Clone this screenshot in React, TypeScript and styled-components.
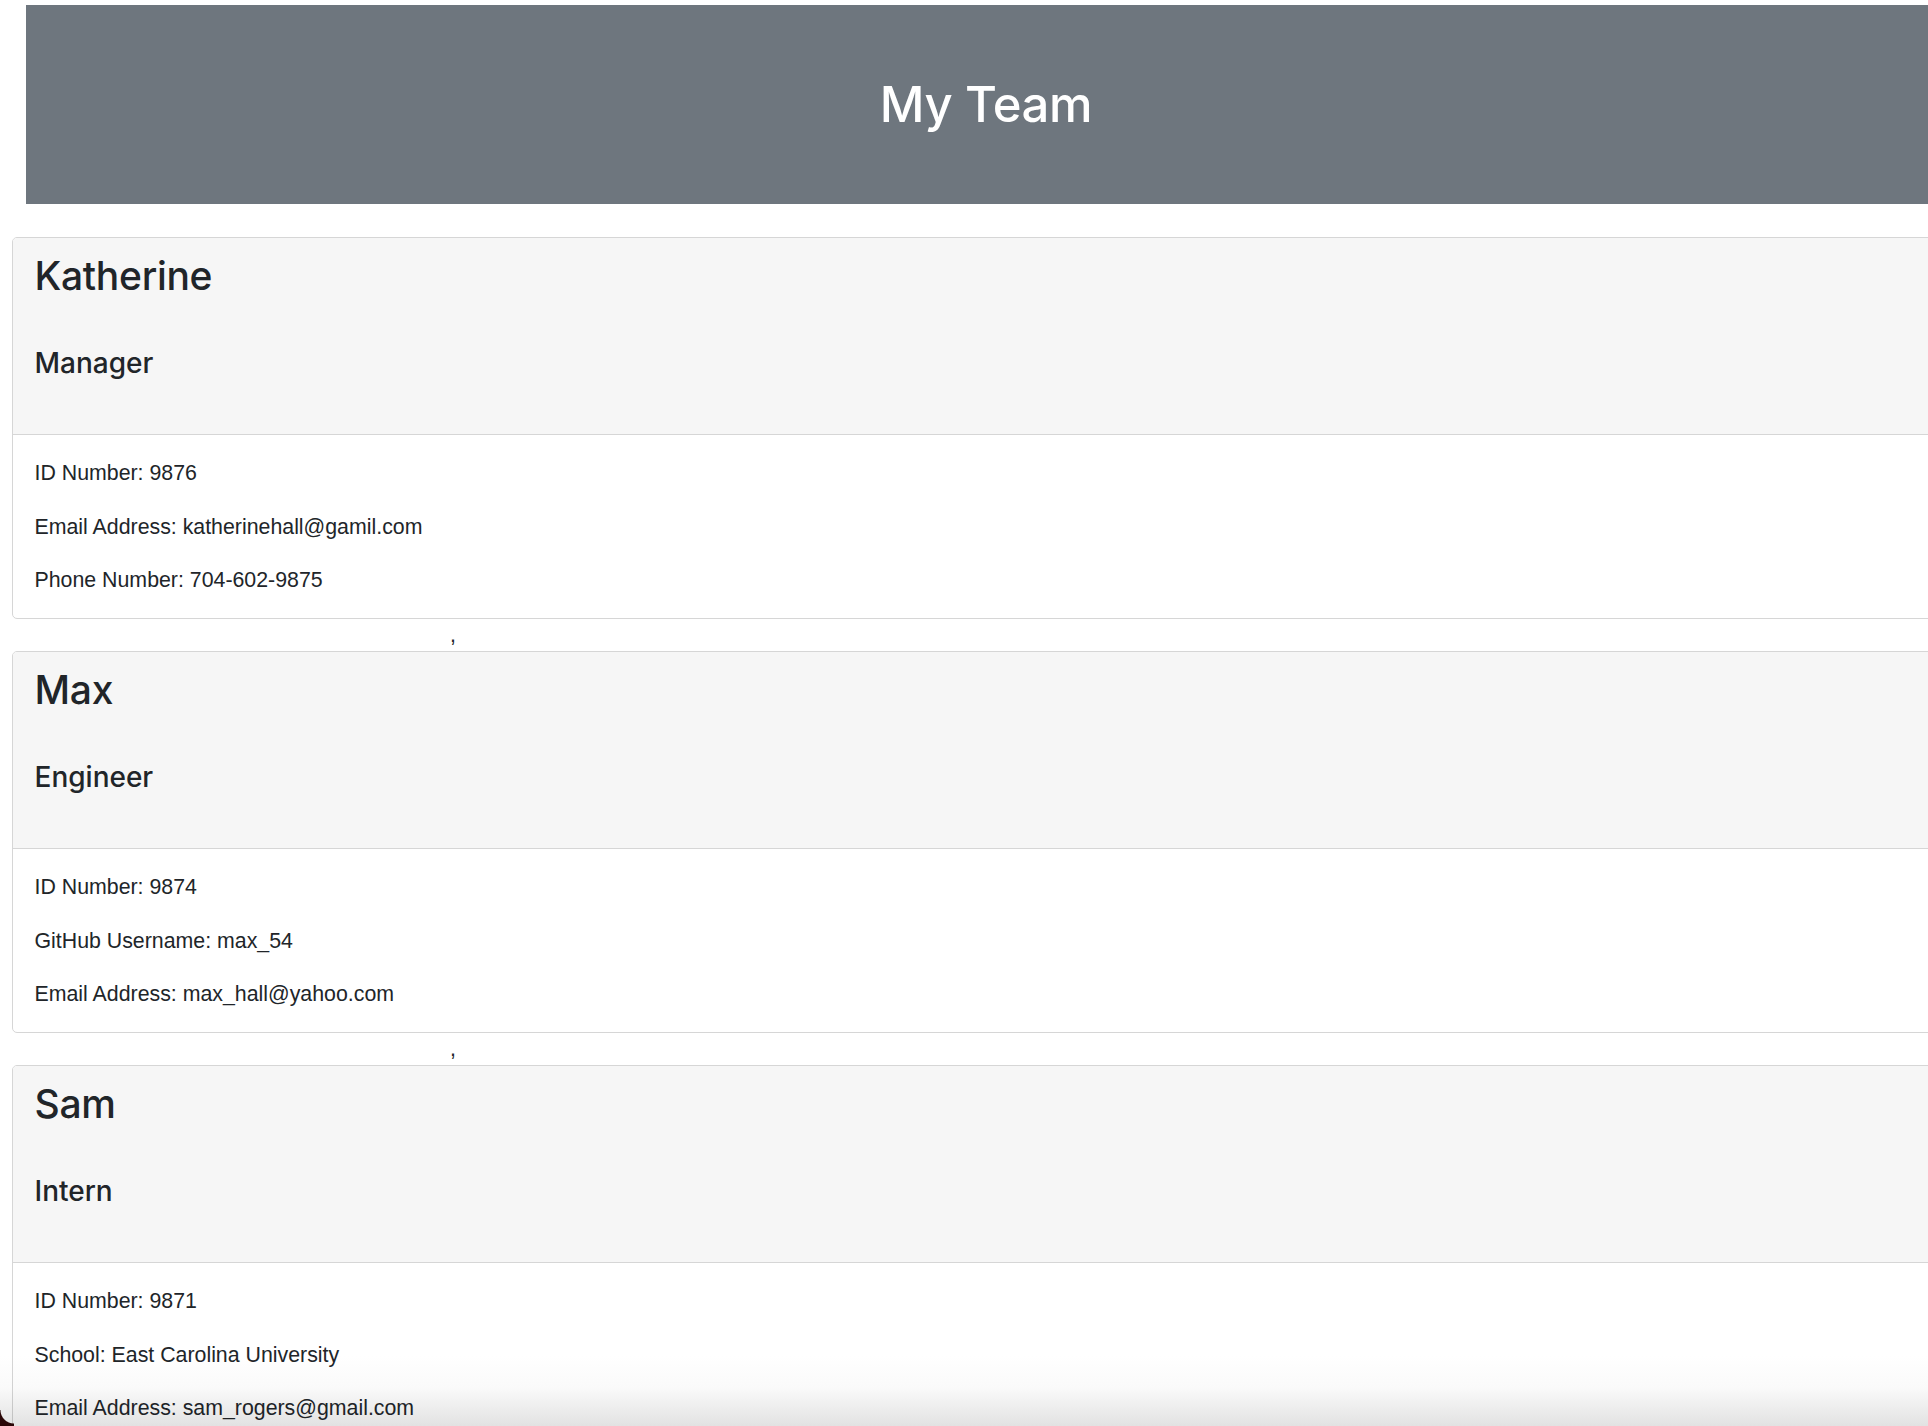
import React from 'react';
import styled, { createGlobalStyle } from 'styled-components';

const GlobalStyle = createGlobalStyle`
    html,
    body {
        margin: 0;
        padding: 0;
        background: #ffffff;
        overflow-x: hidden;
        scrollbar-width: none;
    }

    body::-webkit-scrollbar {
        display: none;
    }

    body {
        font-family: 'Liberation Sans', Arial, sans-serif;
        color: #212529;
    }

    h1,
    h2,
    h3 {
        font-family: Inter, 'Liberation Sans', Arial, sans-serif;
        font-weight: 500;
    }
`;

const Page = styled.div`
    width: 1960px;
    padding-top: 5px;
`;

const Jumbotron = styled.header`
    margin-left: 26px;
    width: 1920px;
    padding: 70px 0 69px;
    background: #6e767e;
    color: #ffffff;
    text-align: center;

    h1 {
        margin: 0;
        font-size: 49px;
        line-height: 60px;
        letter-spacing: -0.4px;
    }
`;

const TeamList = styled.main`
    display: flex;
    flex-direction: column;
    margin-top: 33px;
    margin-left: 12px;
    width: 1948px;
`;

const Card = styled.section`
    border: 1px solid #d6d6d6;
    border-radius: 5px;
    overflow: hidden;
    background: #ffffff;
`;

const CardHeader = styled.div`
    padding: 13px 22px 0 21.5px;
    background: #f6f6f6;
    border-bottom: 1px solid #d6d6d6;

    h2 {
        margin: 0 0 45px;
        font-size: 39px;
        line-height: 49px;
        letter-spacing: -0.3px;
    }

    h3 {
        margin: 0 0 53px;
        font-size: 28px;
        line-height: 36px;
    }
`;

const CardBody = styled.div`
    padding: 22px 22px 0 21.5px;

    p {
        margin: 0 0 21.67px;
        font-size: 21.33px;
        line-height: 32px;
    }
`;

// stray separator left over from joining the card markup
const Separator = styled.div<{ $indent: number }>`
    height: 32px;
    padding-left: ${(p) => p.$indent}px;
    font-size: 21.33px;
    line-height: 32px;
`;

const BottomFade = styled.div`
    position: fixed;
    left: 0;
    right: 0;
    bottom: 0;
    height: 70px;
    pointer-events: none;
    mix-blend-mode: multiply;
    background: linear-gradient(
        to bottom,
        rgba(255, 255, 255, 1) 0%,
        rgba(250, 250, 250, 1) 45%,
        rgba(226, 226, 226, 1) 100%
    );
`;

const WindowCorner = styled.div`
    position: fixed;
    left: 0;
    bottom: 0;
    width: 14px;
    height: 16px;
    pointer-events: none;
    background: radial-gradient(circle at 14px 0, transparent 13px, #2a0707 14px);
`;

type Member = {
    name: string;
    role: string;
    lines: string[];
};

const team: Member[] = [
    {
        name: 'Katherine',
        role: 'Manager',
        lines: [
            'ID Number: 9876',
            'Email Address: katherinehall@gamil.com',
            'Phone Number: 704-602-9875',
        ],
    },
    {
        name: 'Max',
        role: 'Engineer',
        lines: ['ID Number: 9874', 'GitHub Username: max_54', 'Email Address: max_hall@yahoo.com'],
    },
    {
        name: 'Sam',
        role: 'Intern',
        lines: [
            'ID Number: 9871',
            'School: East Carolina University',
            'Email Address: sam_rogers@gmail.com',
        ],
    },
];

const App: React.FC = () => {
    return (
        <>
            <GlobalStyle />
            <Page>
                <Jumbotron>
                    <h1>My Team</h1>
                </Jumbotron>
                <TeamList>
                    {team.map((member, i) => (
                        <React.Fragment key={member.name}>
                            {i > 0 && <Separator $indent={438}>,</Separator>}
                            <Card>
                                <CardHeader>
                                    <h2>{member.name}</h2>
                                    <h3>{member.role}</h3>
                                </CardHeader>
                                <CardBody>
                                    {member.lines.map((line) => (
                                        <p key={line}>{line}</p>
                                    ))}
                                </CardBody>
                            </Card>
                        </React.Fragment>
                    ))}
                </TeamList>
            </Page>
            <BottomFade />
            <WindowCorner />
        </>
    );
};

export default App;
